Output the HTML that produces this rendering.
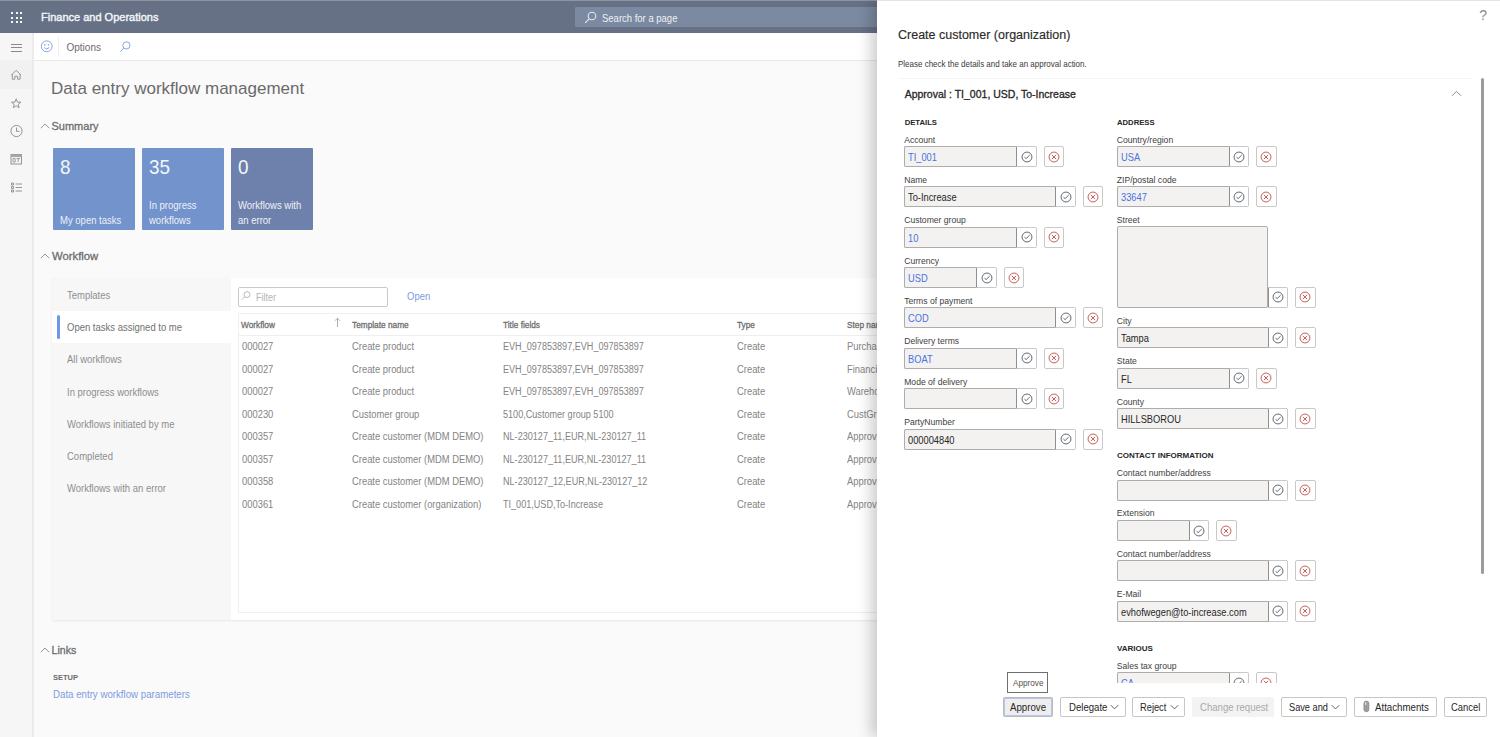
<!DOCTYPE html>
<html><head><meta charset="utf-8"><style>
html,body{margin:0;padding:0;width:1500px;height:737px;overflow:hidden;background:#fafafa;position:relative}
body{font-family:"Liberation Sans",sans-serif}
.t{position:absolute;line-height:1;white-space:nowrap}
</style></head><body>
<div style="position:absolute;left:0px;top:0px;width:1500px;height:33px;background:#667186"></div>
<div style="position:absolute;left:0px;top:0px;width:1500px;height:1px;background:#8e95a2"></div>
<div style="position:absolute;left:11.0px;top:12.0px;width:2px;height:2px;background:#f4f5f7"></div>
<div style="position:absolute;left:11.0px;top:16.6px;width:2px;height:2px;background:#f4f5f7"></div>
<div style="position:absolute;left:11.0px;top:21.2px;width:2px;height:2px;background:#f4f5f7"></div>
<div style="position:absolute;left:15.6px;top:12.0px;width:2px;height:2px;background:#f4f5f7"></div>
<div style="position:absolute;left:15.6px;top:16.6px;width:2px;height:2px;background:#f4f5f7"></div>
<div style="position:absolute;left:15.6px;top:21.2px;width:2px;height:2px;background:#f4f5f7"></div>
<div style="position:absolute;left:20.2px;top:12.0px;width:2px;height:2px;background:#f4f5f7"></div>
<div style="position:absolute;left:20.2px;top:16.6px;width:2px;height:2px;background:#f4f5f7"></div>
<div style="position:absolute;left:20.2px;top:21.2px;width:2px;height:2px;background:#f4f5f7"></div>
<div class="t" style="left:41px;top:12.00px;font-size:11.0px;color:#f4f5f7;-webkit-text-stroke:0.4px #f4f5f7">Finance and Operations</div>
<div style="position:absolute;left:575px;top:7px;width:330px;height:20px;background:#7b8aa1;border-radius:1px"></div>
<svg style="position:absolute;left:584px;top:11px" width="14" height="14" viewBox="0 0 14 14"><circle cx="8" cy="5" r="3.8" fill="none" stroke="#e8ebf0" stroke-width="1.1"/><line x1="5.3" y1="7.7" x2="1.2" y2="11.8" stroke="#e8ebf0" stroke-width="1.1"/></svg>
<div class="t" style="left:602px;top:13.00px;font-size:10.64px;color:#eef0f4;transform:scaleX(0.8929);transform-origin:0 0;">Search for a page</div>
<div style="position:absolute;left:0px;top:33px;width:33px;height:704px;background:#f6f6f6"></div>
<div style="position:absolute;left:32.4px;top:33px;width:1.6px;height:704px;background:#ebebeb"></div>
<div style="position:absolute;left:0px;top:60px;width:32.4px;height:29px;background:#f1f1f1"></div>
<div style="position:absolute;left:11px;top:43.5px;width:11px;height:1px;background:#8a8a8a"></div>
<div style="position:absolute;left:11px;top:47px;width:11px;height:1px;background:#8a8a8a"></div>
<div style="position:absolute;left:11px;top:50.5px;width:11px;height:1px;background:#8a8a8a"></div>
<svg style="position:absolute;left:0;top:60px" width="33" height="140" viewBox="0 0 33 140" fill="none" stroke="#8a8a8a" stroke-width="0.9">
<path d="M11.3 15.2 L16.2 10.3 L21.1 15.2 M12.3 14.2 V19.2 H14.8 V16.3 H17.6 V19.2 H20.1 V14.2"/>
<path d="M16.2 38.8 L17.4 42.1 L20.9 42.2 L18.2 44.4 L19.1 47.8 L16.2 45.8 L13.3 47.8 L14.2 44.4 L11.5 42.2 L15 42.1 Z"/>
<circle cx="16.5" cy="71" r="5.6"/><path d="M16.5 67.5 V71.3 H19.5"/>
<rect x="11" y="94.5" width="10.5" height="9.5" /><rect x="11" y="94.5" width="10.5" height="2.6" fill="#a8a8a8" stroke="none"/><path d="M13 98.6 H15.2 V102 H13 Z M16.5 98.6 H20 M18.2 98.6 V102" stroke-width="0.8"/>
<path d="M11.5 123 h2 v2 h-2 z M11.5 126.5 h2 v2 h-2 z M11.5 130 h2 v2 h-2 z M15.5 124 H22 M15.5 127.5 H22 M15.5 131 H22"/>
</svg>
<div style="position:absolute;left:34px;top:33px;width:1466px;height:27px;background:#ffffff"></div>
<div style="position:absolute;left:34px;top:60px;width:1466px;height:1px;background:#e9e9e9"></div>
<svg style="position:absolute;left:38px;top:38px" width="18" height="18" viewBox="0 0 18 18" fill="none" stroke="#7d9be0" stroke-width="0.9">
<circle cx="8.7" cy="8.3" r="5.4"/><path d="M6.2 9.6 Q8.7 12.2 11.2 9.6"/><circle cx="6.9" cy="6.9" r="0.35" fill="#7d9be0"/><circle cx="10.5" cy="6.9" r="0.35" fill="#7d9be0"/></svg>
<div style="position:absolute;left:58px;top:37px;width:1px;height:20px;background:#eeeeee"></div>
<div class="t" style="left:66.5px;top:43.00px;font-size:10.0px;color:#6b6b6b;">Options</div>
<svg style="position:absolute;left:118px;top:40px" width="14" height="14" viewBox="0 0 14 14"><circle cx="8.4" cy="5.4" r="3.6" fill="none" stroke="#7d9be0" stroke-width="0.9"/><line x1="5.8" y1="8" x2="2.4" y2="11.6" stroke="#7d9be0" stroke-width="0.9"/></svg>
<div style="position:absolute;left:34px;top:61px;width:1466px;height:676px;background:#fafafa"></div>
<div class="t" style="left:51px;top:80.00px;font-size:17.0px;color:#6a6a6a;">Data entry workflow management</div>
<svg style="position:absolute;left:40px;top:122.5px" width="10" height="6" viewBox="0 0 10 6"><path d="M0.8 5.2 L5 1 L9.2 5.2" fill="none" stroke="#8a8a8a" stroke-width="0.9"/></svg>
<div class="t" style="left:51.5px;top:121.00px;font-size:11.0px;color:#6d6d6d;-webkit-text-stroke:0.3px #6d6d6d;">Summary</div>
<div style="position:absolute;left:53px;top:148px;width:82px;height:82px;background:#7293cb;border-radius:1px"></div>
<div class="t" style="left:60px;top:156.00px;font-size:21.0px;color:#f4f6fa;transform:scaleX(0.9);transform-origin:0 0">8</div>
<div class="t" style="left:60px;top:216.00px;font-size:10.36px;color:#eef1f7;transform:scaleX(0.9174);transform-origin:0 0;">My open tasks</div>
<div style="position:absolute;left:142px;top:148px;width:82px;height:82px;background:#7293cb;border-radius:1px"></div>
<div class="t" style="left:149px;top:156.00px;font-size:21.0px;color:#f4f6fa;transform:scaleX(0.9);transform-origin:0 0">35</div>
<div class="t" style="left:149px;top:201.00px;font-size:10.36px;color:#eef1f7;transform:scaleX(0.9174);transform-origin:0 0;">In progress</div>
<div class="t" style="left:149px;top:216.00px;font-size:10.36px;color:#eef1f7;transform:scaleX(0.9174);transform-origin:0 0;">workflows</div>
<div style="position:absolute;left:231px;top:148px;width:82px;height:82px;background:#6e81ac;border-radius:1px"></div>
<div class="t" style="left:238px;top:156.00px;font-size:21.0px;color:#f4f6fa;transform:scaleX(0.9);transform-origin:0 0">0</div>
<div class="t" style="left:238px;top:201.00px;font-size:10.36px;color:#eef1f7;transform:scaleX(0.9174);transform-origin:0 0;">Workflows with</div>
<div class="t" style="left:238px;top:216.00px;font-size:10.36px;color:#eef1f7;transform:scaleX(0.9174);transform-origin:0 0;">an error</div>
<svg style="position:absolute;left:40px;top:252.5px" width="10" height="6" viewBox="0 0 10 6"><path d="M0.8 5.2 L5 1 L9.2 5.2" fill="none" stroke="#8a8a8a" stroke-width="0.9"/></svg>
<div class="t" style="left:52px;top:251.00px;font-size:11.3px;color:#6d6d6d;-webkit-text-stroke:0.3px #6d6d6d;">Workflow</div>
<div style="position:absolute;left:52px;top:278px;width:830px;height:342px;background:#ffffff;box-shadow:0 1px 2px rgba(0,0,0,0.08)"></div>
<div style="position:absolute;left:52px;top:278px;width:179px;height:342px;background:#f7f7f7"></div>
<div style="position:absolute;left:52px;top:311px;width:179px;height:32px;background:#ffffff"></div>
<div style="position:absolute;left:56.5px;top:314.5px;width:3px;height:24.5px;background:#6f97e6;border-radius:1.5px"></div>
<div class="t" style="left:67px;top:290.00px;font-size:11.21px;color:#8e8e8e;transform:scaleX(0.8475);transform-origin:0 0;">Templates</div>
<div class="t" style="left:67px;top:322.00px;font-size:11.21px;color:#717171;transform:scaleX(0.8475);transform-origin:0 0;">Open tasks assigned to me</div>
<div class="t" style="left:67px;top:354.00px;font-size:11.21px;color:#8e8e8e;transform:scaleX(0.8475);transform-origin:0 0;">All workflows</div>
<div class="t" style="left:67px;top:387.00px;font-size:11.21px;color:#8e8e8e;transform:scaleX(0.8475);transform-origin:0 0;">In progress workflows</div>
<div class="t" style="left:67px;top:419.00px;font-size:11.21px;color:#8e8e8e;transform:scaleX(0.8475);transform-origin:0 0;">Workflows initiated by me</div>
<div class="t" style="left:67px;top:451.00px;font-size:11.21px;color:#8e8e8e;transform:scaleX(0.8475);transform-origin:0 0;">Completed</div>
<div class="t" style="left:67px;top:483.00px;font-size:11.21px;color:#8e8e8e;transform:scaleX(0.8475);transform-origin:0 0;">Workflows with an error</div>
<div style="position:absolute;left:238px;top:286.5px;width:150px;height:20.5px;background:#fff;border:1px solid #c9c9c9;border-radius:2px;box-sizing:border-box"></div>
<svg style="position:absolute;left:240px;top:290px" width="12" height="12" viewBox="0 0 12 12"><circle cx="7" cy="4.6" r="3" fill="none" stroke="#a9a9a9" stroke-width="0.8"/><line x1="4.9" y1="6.7" x2="1.8" y2="9.8" stroke="#a9a9a9" stroke-width="0.8"/></svg>
<div class="t" style="left:256px;top:293.00px;font-size:10.08px;color:#b3b3b3;transform:scaleX(0.8929);transform-origin:0 0;">Filter</div>
<div class="t" style="left:406.5px;top:292.00px;font-size:10.26px;color:#7d9be0;transform:scaleX(0.9259);transform-origin:0 0;">Open</div>
<div style="position:absolute;left:238px;top:313px;width:660px;height:300px;background:#fff;border:1px solid #f0f0f0;box-sizing:border-box"></div>
<div style="position:absolute;left:238px;top:334.5px;width:660px;height:1px;background:#efefef"></div>
<div class="t" style="left:241.3px;top:320.00px;font-size:9.54px;color:#6d6d6d;-webkit-text-stroke:0.3px #6d6d6d;transform:scaleX(0.8696);transform-origin:0 0;">Workflow</div>
<div class="t" style="left:351.7px;top:320.00px;font-size:9.54px;color:#6d6d6d;-webkit-text-stroke:0.3px #6d6d6d;transform:scaleX(0.8696);transform-origin:0 0;">Template name</div>
<div class="t" style="left:503px;top:320.00px;font-size:9.54px;color:#6d6d6d;-webkit-text-stroke:0.3px #6d6d6d;transform:scaleX(0.8696);transform-origin:0 0;">Title fields</div>
<div class="t" style="left:737px;top:320.00px;font-size:9.54px;color:#6d6d6d;-webkit-text-stroke:0.3px #6d6d6d;transform:scaleX(0.8696);transform-origin:0 0;">Type</div>
<div class="t" style="left:847px;top:320.00px;font-size:9.54px;color:#6d6d6d;-webkit-text-stroke:0.3px #6d6d6d;transform:scaleX(0.8696);transform-origin:0 0;">Step name</div>
<svg style="position:absolute;left:334px;top:317px" width="7" height="11" viewBox="0 0 7 11"><path d="M3.5 10 V1.2 M1 3.7 L3.5 1.2 L6 3.7" fill="none" stroke="#9a9a9a" stroke-width="0.8"/></svg>
<div class="t" style="left:241.5px;top:341.00px;font-size:10.53px;color:#848484;transform:scaleX(0.8929);transform-origin:0 0;">000027</div>
<div class="t" style="left:351.7px;top:341.00px;font-size:10.53px;color:#848484;transform:scaleX(0.8929);transform-origin:0 0;">Create product</div>
<div class="t" style="left:503px;top:342.00px;font-size:10.19px;color:#848484;transform:scaleX(0.8929);transform-origin:0 0;">EVH_097853897,EVH_097853897</div>
<div class="t" style="left:737px;top:341.00px;font-size:10.53px;color:#848484;transform:scaleX(0.8929);transform-origin:0 0;">Create</div>
<div class="t" style="left:847px;top:341.00px;font-size:10.53px;color:#848484;transform:scaleX(0.8929);transform-origin:0 0;">Purchase</div>
<div class="t" style="left:241.5px;top:364.00px;font-size:10.53px;color:#848484;transform:scaleX(0.8929);transform-origin:0 0;">000027</div>
<div class="t" style="left:351.7px;top:364.00px;font-size:10.53px;color:#848484;transform:scaleX(0.8929);transform-origin:0 0;">Create product</div>
<div class="t" style="left:503px;top:365.00px;font-size:10.19px;color:#848484;transform:scaleX(0.8929);transform-origin:0 0;">EVH_097853897,EVH_097853897</div>
<div class="t" style="left:737px;top:364.00px;font-size:10.53px;color:#848484;transform:scaleX(0.8929);transform-origin:0 0;">Create</div>
<div class="t" style="left:847px;top:364.00px;font-size:10.53px;color:#848484;transform:scaleX(0.8929);transform-origin:0 0;">Financial</div>
<div class="t" style="left:241.5px;top:386.00px;font-size:10.53px;color:#848484;transform:scaleX(0.8929);transform-origin:0 0;">000027</div>
<div class="t" style="left:351.7px;top:386.00px;font-size:10.53px;color:#848484;transform:scaleX(0.8929);transform-origin:0 0;">Create product</div>
<div class="t" style="left:503px;top:387.00px;font-size:10.19px;color:#848484;transform:scaleX(0.8929);transform-origin:0 0;">EVH_097853897,EVH_097853897</div>
<div class="t" style="left:737px;top:386.00px;font-size:10.53px;color:#848484;transform:scaleX(0.8929);transform-origin:0 0;">Create</div>
<div class="t" style="left:847px;top:386.00px;font-size:10.53px;color:#848484;transform:scaleX(0.8929);transform-origin:0 0;">Warehouse</div>
<div class="t" style="left:241.5px;top:409.00px;font-size:10.53px;color:#848484;transform:scaleX(0.8929);transform-origin:0 0;">000230</div>
<div class="t" style="left:351.7px;top:409.00px;font-size:10.53px;color:#848484;transform:scaleX(0.8929);transform-origin:0 0;">Customer group</div>
<div class="t" style="left:503px;top:410.00px;font-size:10.19px;color:#848484;transform:scaleX(0.8929);transform-origin:0 0;">5100,Customer group 5100</div>
<div class="t" style="left:737px;top:409.00px;font-size:10.53px;color:#848484;transform:scaleX(0.8929);transform-origin:0 0;">Create</div>
<div class="t" style="left:847px;top:409.00px;font-size:10.53px;color:#848484;transform:scaleX(0.8929);transform-origin:0 0;">CustGroup</div>
<div class="t" style="left:241.5px;top:431.00px;font-size:10.53px;color:#848484;transform:scaleX(0.8929);transform-origin:0 0;">000357</div>
<div class="t" style="left:351.7px;top:431.00px;font-size:10.53px;color:#848484;transform:scaleX(0.8929);transform-origin:0 0;">Create customer (MDM DEMO)</div>
<div class="t" style="left:503px;top:432.00px;font-size:10.19px;color:#848484;transform:scaleX(0.8929);transform-origin:0 0;">NL-230127_11,EUR,NL-230127_11</div>
<div class="t" style="left:737px;top:431.00px;font-size:10.53px;color:#848484;transform:scaleX(0.8929);transform-origin:0 0;">Create</div>
<div class="t" style="left:847px;top:431.00px;font-size:10.53px;color:#848484;transform:scaleX(0.8929);transform-origin:0 0;">Approval</div>
<div class="t" style="left:241.5px;top:454.00px;font-size:10.53px;color:#848484;transform:scaleX(0.8929);transform-origin:0 0;">000357</div>
<div class="t" style="left:351.7px;top:454.00px;font-size:10.53px;color:#848484;transform:scaleX(0.8929);transform-origin:0 0;">Create customer (MDM DEMO)</div>
<div class="t" style="left:503px;top:455.00px;font-size:10.19px;color:#848484;transform:scaleX(0.8929);transform-origin:0 0;">NL-230127_11,EUR,NL-230127_11</div>
<div class="t" style="left:737px;top:454.00px;font-size:10.53px;color:#848484;transform:scaleX(0.8929);transform-origin:0 0;">Create</div>
<div class="t" style="left:847px;top:454.00px;font-size:10.53px;color:#848484;transform:scaleX(0.8929);transform-origin:0 0;">Approval</div>
<div class="t" style="left:241.5px;top:476.00px;font-size:10.53px;color:#848484;transform:scaleX(0.8929);transform-origin:0 0;">000358</div>
<div class="t" style="left:351.7px;top:476.00px;font-size:10.53px;color:#848484;transform:scaleX(0.8929);transform-origin:0 0;">Create customer (MDM DEMO)</div>
<div class="t" style="left:503px;top:477.00px;font-size:10.19px;color:#848484;transform:scaleX(0.8929);transform-origin:0 0;">NL-230127_12,EUR,NL-230127_12</div>
<div class="t" style="left:737px;top:476.00px;font-size:10.53px;color:#848484;transform:scaleX(0.8929);transform-origin:0 0;">Create</div>
<div class="t" style="left:847px;top:476.00px;font-size:10.53px;color:#848484;transform:scaleX(0.8929);transform-origin:0 0;">Approval</div>
<div class="t" style="left:241.5px;top:499.00px;font-size:10.53px;color:#848484;transform:scaleX(0.8929);transform-origin:0 0;">000361</div>
<div class="t" style="left:351.7px;top:499.00px;font-size:10.53px;color:#848484;transform:scaleX(0.8929);transform-origin:0 0;">Create customer (organization)</div>
<div class="t" style="left:503px;top:500.00px;font-size:10.19px;color:#848484;transform:scaleX(0.8929);transform-origin:0 0;">TI_001,USD,To-Increase</div>
<div class="t" style="left:737px;top:499.00px;font-size:10.53px;color:#848484;transform:scaleX(0.8929);transform-origin:0 0;">Create</div>
<div class="t" style="left:847px;top:499.00px;font-size:10.53px;color:#848484;transform:scaleX(0.8929);transform-origin:0 0;">Approval</div>
<svg style="position:absolute;left:40px;top:647px" width="10" height="6" viewBox="0 0 10 6"><path d="M0.8 5.2 L5 1 L9.2 5.2" fill="none" stroke="#8a8a8a" stroke-width="0.9"/></svg>
<div class="t" style="left:51.6px;top:645.00px;font-size:10.6px;color:#6d6d6d;-webkit-text-stroke:0.3px #6d6d6d;">Links</div>
<div class="t" style="left:53px;top:674.00px;font-size:7.5px;color:#6a6a6a;font-weight:700;">SETUP</div>
<div class="t" style="left:53.4px;top:689.00px;font-size:11.06px;color:#7d9be0;transform:scaleX(0.8772);transform-origin:0 0;">Data entry workflow parameters</div>
<div style="position:absolute;left:877px;top:0;width:623px;height:737px;background:#fff;box-shadow:-6px 0 14px rgba(0,0,0,0.2)"></div>
<div style="position:absolute;left:877px;top:0px;width:623px;height:1px;background:#e3e3e3"></div>
<div class="t" style="left:1479.2px;top:8.00px;font-size:14.0px;color:#8a8a8a;">?</div>
<div class="t" style="left:898px;top:29.00px;font-size:12.5px;color:#2b2b2b;-webkit-text-stroke:0.15px #2b2b2b">Create customer (organization)</div>
<div class="t" style="left:898px;top:60.00px;font-size:8.56px;color:#3a3a3a;transform:scaleX(0.9346);transform-origin:0 0;">Please check the details and take an approval action.</div>
<div style="position:absolute;left:899px;top:78px;width:574px;height:1px;background:#f4f4f4"></div>
<div class="t" style="left:904.7px;top:89.00px;font-size:10.5px;color:#262626;-webkit-text-stroke:0.3px #262626;">Approval : TI_001, USD, To-Increase</div>
<svg style="position:absolute;left:1451px;top:90px" width="11" height="7" viewBox="0 0 11 7"><path d="M1 5.8 L5.5 1.3 L10 5.8" fill="none" stroke="#6b7fa6" stroke-width="0.9"/></svg>
<div style="position:absolute;left:1480.5px;top:78px;width:3.5px;height:495.5px;background:#9b9b9b;border-radius:2px"></div>
<div class="t" style="left:904.7px;top:119.00px;font-size:7.7px;color:#262626;font-weight:700;">DETAILS</div>
<div class="t" style="left:1117px;top:119.00px;font-size:7.7px;color:#262626;font-weight:700;">ADDRESS</div>
<div class="t" style="left:904.2px;top:136.00px;font-size:8.6px;color:#3e3e3e;">Account</div>
<div style="position:absolute;left:904.2px;top:146.2px;width:112px;height:21px;background:#f3f2f1;border:1px solid #adadad;border-right:none;border-radius:2px 0 0 2px;box-sizing:border-box"></div>
<div class="t" style="left:908.2px;top:152.00px;font-size:10.6px;color:#4a73e0;transform:scaleX(0.8772);transform-origin:0 0;">TI_001</div>
<div style="position:absolute;left:1016.2px;top:146.2px;width:20.6px;height:21px;background:#fff;border:1px solid #c8c8c8;border-left:1px solid #8f8f8f;border-radius:0 2px 2px 0;box-sizing:border-box"></div>
<svg style="position:absolute;left:1019.5px;top:149.7px" width="14" height="14" viewBox="0 0 14 14"><circle cx="7" cy="7" r="4.95" fill="none" stroke="#46505a" stroke-width="0.85"/><path d="M4.5 7.2 L6.1 8.6 L9.7 5.1" fill="none" stroke="#46505a" stroke-width="0.85"/></svg>
<div style="position:absolute;left:1043.5px;top:146.2px;width:20.6px;height:21px;background:#fff;border:1px solid #c8c8c8;border-radius:2px;box-sizing:border-box"></div>
<svg style="position:absolute;left:1046.8px;top:149.7px" width="14" height="14" viewBox="0 0 14 14"><circle cx="7" cy="7" r="4.95" fill="none" stroke="#c0443f" stroke-width="0.85"/><path d="M4.9 4.9 L9.1 9.1 M9.1 4.9 L4.9 9.1" fill="none" stroke="#c0443f" stroke-width="0.85"/></svg>
<div class="t" style="left:904.2px;top:176.00px;font-size:8.6px;color:#3e3e3e;">Name</div>
<div style="position:absolute;left:904.2px;top:186.4px;width:151px;height:21px;background:#f3f2f1;border:1px solid #adadad;border-right:none;border-radius:2px 0 0 2px;box-sizing:border-box"></div>
<div class="t" style="left:908.2px;top:192.00px;font-size:10.6px;color:#262626;transform:scaleX(0.8772);transform-origin:0 0;">To-Increase</div>
<div style="position:absolute;left:1055.2px;top:186.4px;width:20.6px;height:21px;background:#fff;border:1px solid #c8c8c8;border-left:1px solid #8f8f8f;border-radius:0 2px 2px 0;box-sizing:border-box"></div>
<svg style="position:absolute;left:1058.5px;top:189.9px" width="14" height="14" viewBox="0 0 14 14"><circle cx="7" cy="7" r="4.95" fill="none" stroke="#46505a" stroke-width="0.85"/><path d="M4.5 7.2 L6.1 8.6 L9.7 5.1" fill="none" stroke="#46505a" stroke-width="0.85"/></svg>
<div style="position:absolute;left:1082.5px;top:186.4px;width:20.6px;height:21px;background:#fff;border:1px solid #c8c8c8;border-radius:2px;box-sizing:border-box"></div>
<svg style="position:absolute;left:1085.8px;top:189.9px" width="14" height="14" viewBox="0 0 14 14"><circle cx="7" cy="7" r="4.95" fill="none" stroke="#c0443f" stroke-width="0.85"/><path d="M4.9 4.9 L9.1 9.1 M9.1 4.9 L4.9 9.1" fill="none" stroke="#c0443f" stroke-width="0.85"/></svg>
<div class="t" style="left:904.2px;top:216.00px;font-size:8.6px;color:#3e3e3e;">Customer group</div>
<div style="position:absolute;left:904.2px;top:226.8px;width:112px;height:21px;background:#f3f2f1;border:1px solid #adadad;border-right:none;border-radius:2px 0 0 2px;box-sizing:border-box"></div>
<div class="t" style="left:908.2px;top:233.00px;font-size:10.6px;color:#4a73e0;transform:scaleX(0.8772);transform-origin:0 0;">10</div>
<div style="position:absolute;left:1016.2px;top:226.8px;width:20.6px;height:21px;background:#fff;border:1px solid #c8c8c8;border-left:1px solid #8f8f8f;border-radius:0 2px 2px 0;box-sizing:border-box"></div>
<svg style="position:absolute;left:1019.5px;top:230.3px" width="14" height="14" viewBox="0 0 14 14"><circle cx="7" cy="7" r="4.95" fill="none" stroke="#46505a" stroke-width="0.85"/><path d="M4.5 7.2 L6.1 8.6 L9.7 5.1" fill="none" stroke="#46505a" stroke-width="0.85"/></svg>
<div style="position:absolute;left:1043.5px;top:226.8px;width:20.6px;height:21px;background:#fff;border:1px solid #c8c8c8;border-radius:2px;box-sizing:border-box"></div>
<svg style="position:absolute;left:1046.8px;top:230.3px" width="14" height="14" viewBox="0 0 14 14"><circle cx="7" cy="7" r="4.95" fill="none" stroke="#c0443f" stroke-width="0.85"/><path d="M4.9 4.9 L9.1 9.1 M9.1 4.9 L4.9 9.1" fill="none" stroke="#c0443f" stroke-width="0.85"/></svg>
<div class="t" style="left:904.2px;top:257.00px;font-size:8.6px;color:#3e3e3e;">Currency</div>
<div style="position:absolute;left:904.2px;top:267.2px;width:72px;height:21px;background:#f3f2f1;border:1px solid #adadad;border-right:none;border-radius:2px 0 0 2px;box-sizing:border-box"></div>
<div class="t" style="left:908.2px;top:273.00px;font-size:10.6px;color:#4a73e0;transform:scaleX(0.8772);transform-origin:0 0;">USD</div>
<div style="position:absolute;left:976.2px;top:267.2px;width:20.6px;height:21px;background:#fff;border:1px solid #c8c8c8;border-left:1px solid #8f8f8f;border-radius:0 2px 2px 0;box-sizing:border-box"></div>
<svg style="position:absolute;left:979.5px;top:270.7px" width="14" height="14" viewBox="0 0 14 14"><circle cx="7" cy="7" r="4.95" fill="none" stroke="#46505a" stroke-width="0.85"/><path d="M4.5 7.2 L6.1 8.6 L9.7 5.1" fill="none" stroke="#46505a" stroke-width="0.85"/></svg>
<div style="position:absolute;left:1003.5px;top:267.2px;width:20.6px;height:21px;background:#fff;border:1px solid #c8c8c8;border-radius:2px;box-sizing:border-box"></div>
<svg style="position:absolute;left:1006.8px;top:270.7px" width="14" height="14" viewBox="0 0 14 14"><circle cx="7" cy="7" r="4.95" fill="none" stroke="#c0443f" stroke-width="0.85"/><path d="M4.9 4.9 L9.1 9.1 M9.1 4.9 L4.9 9.1" fill="none" stroke="#c0443f" stroke-width="0.85"/></svg>
<div class="t" style="left:904.2px;top:297.00px;font-size:8.6px;color:#3e3e3e;">Terms of payment</div>
<div style="position:absolute;left:904.2px;top:307.4px;width:151px;height:21px;background:#f3f2f1;border:1px solid #adadad;border-right:none;border-radius:2px 0 0 2px;box-sizing:border-box"></div>
<div class="t" style="left:908.2px;top:313.00px;font-size:10.6px;color:#4a73e0;transform:scaleX(0.8772);transform-origin:0 0;">COD</div>
<div style="position:absolute;left:1055.2px;top:307.4px;width:20.6px;height:21px;background:#fff;border:1px solid #c8c8c8;border-left:1px solid #8f8f8f;border-radius:0 2px 2px 0;box-sizing:border-box"></div>
<svg style="position:absolute;left:1058.5px;top:310.9px" width="14" height="14" viewBox="0 0 14 14"><circle cx="7" cy="7" r="4.95" fill="none" stroke="#46505a" stroke-width="0.85"/><path d="M4.5 7.2 L6.1 8.6 L9.7 5.1" fill="none" stroke="#46505a" stroke-width="0.85"/></svg>
<div style="position:absolute;left:1082.5px;top:307.4px;width:20.6px;height:21px;background:#fff;border:1px solid #c8c8c8;border-radius:2px;box-sizing:border-box"></div>
<svg style="position:absolute;left:1085.8px;top:310.9px" width="14" height="14" viewBox="0 0 14 14"><circle cx="7" cy="7" r="4.95" fill="none" stroke="#c0443f" stroke-width="0.85"/><path d="M4.9 4.9 L9.1 9.1 M9.1 4.9 L4.9 9.1" fill="none" stroke="#c0443f" stroke-width="0.85"/></svg>
<div class="t" style="left:904.2px;top:337.00px;font-size:8.6px;color:#3e3e3e;">Delivery terms</div>
<div style="position:absolute;left:904.2px;top:347.8px;width:112px;height:21px;background:#f3f2f1;border:1px solid #adadad;border-right:none;border-radius:2px 0 0 2px;box-sizing:border-box"></div>
<div class="t" style="left:908.2px;top:354.00px;font-size:10.6px;color:#4a73e0;transform:scaleX(0.8772);transform-origin:0 0;">BOAT</div>
<div style="position:absolute;left:1016.2px;top:347.8px;width:20.6px;height:21px;background:#fff;border:1px solid #c8c8c8;border-left:1px solid #8f8f8f;border-radius:0 2px 2px 0;box-sizing:border-box"></div>
<svg style="position:absolute;left:1019.5px;top:351.3px" width="14" height="14" viewBox="0 0 14 14"><circle cx="7" cy="7" r="4.95" fill="none" stroke="#46505a" stroke-width="0.85"/><path d="M4.5 7.2 L6.1 8.6 L9.7 5.1" fill="none" stroke="#46505a" stroke-width="0.85"/></svg>
<div style="position:absolute;left:1043.5px;top:347.8px;width:20.6px;height:21px;background:#fff;border:1px solid #c8c8c8;border-radius:2px;box-sizing:border-box"></div>
<svg style="position:absolute;left:1046.8px;top:351.3px" width="14" height="14" viewBox="0 0 14 14"><circle cx="7" cy="7" r="4.95" fill="none" stroke="#c0443f" stroke-width="0.85"/><path d="M4.9 4.9 L9.1 9.1 M9.1 4.9 L4.9 9.1" fill="none" stroke="#c0443f" stroke-width="0.85"/></svg>
<div class="t" style="left:904.2px;top:378.00px;font-size:8.6px;color:#3e3e3e;">Mode of delivery</div>
<div style="position:absolute;left:904.2px;top:388.4px;width:112px;height:21px;background:#f3f2f1;border:1px solid #adadad;border-right:none;border-radius:2px 0 0 2px;box-sizing:border-box"></div>
<div style="position:absolute;left:1016.2px;top:388.4px;width:20.6px;height:21px;background:#fff;border:1px solid #c8c8c8;border-left:1px solid #8f8f8f;border-radius:0 2px 2px 0;box-sizing:border-box"></div>
<svg style="position:absolute;left:1019.5px;top:391.9px" width="14" height="14" viewBox="0 0 14 14"><circle cx="7" cy="7" r="4.95" fill="none" stroke="#46505a" stroke-width="0.85"/><path d="M4.5 7.2 L6.1 8.6 L9.7 5.1" fill="none" stroke="#46505a" stroke-width="0.85"/></svg>
<div style="position:absolute;left:1043.5px;top:388.4px;width:20.6px;height:21px;background:#fff;border:1px solid #c8c8c8;border-radius:2px;box-sizing:border-box"></div>
<svg style="position:absolute;left:1046.8px;top:391.9px" width="14" height="14" viewBox="0 0 14 14"><circle cx="7" cy="7" r="4.95" fill="none" stroke="#c0443f" stroke-width="0.85"/><path d="M4.9 4.9 L9.1 9.1 M9.1 4.9 L4.9 9.1" fill="none" stroke="#c0443f" stroke-width="0.85"/></svg>
<div class="t" style="left:904.2px;top:418.00px;font-size:8.6px;color:#3e3e3e;">PartyNumber</div>
<div style="position:absolute;left:904.2px;top:428.8px;width:151px;height:21px;background:#f3f2f1;border:1px solid #adadad;border-right:none;border-radius:2px 0 0 2px;box-sizing:border-box"></div>
<div class="t" style="left:908.2px;top:435.00px;font-size:10.6px;color:#262626;transform:scaleX(0.8772);transform-origin:0 0;">000004840</div>
<div style="position:absolute;left:1055.2px;top:428.8px;width:20.6px;height:21px;background:#fff;border:1px solid #c8c8c8;border-left:1px solid #8f8f8f;border-radius:0 2px 2px 0;box-sizing:border-box"></div>
<svg style="position:absolute;left:1058.5px;top:432.3px" width="14" height="14" viewBox="0 0 14 14"><circle cx="7" cy="7" r="4.95" fill="none" stroke="#46505a" stroke-width="0.85"/><path d="M4.5 7.2 L6.1 8.6 L9.7 5.1" fill="none" stroke="#46505a" stroke-width="0.85"/></svg>
<div style="position:absolute;left:1082.5px;top:428.8px;width:20.6px;height:21px;background:#fff;border:1px solid #c8c8c8;border-radius:2px;box-sizing:border-box"></div>
<svg style="position:absolute;left:1085.8px;top:432.3px" width="14" height="14" viewBox="0 0 14 14"><circle cx="7" cy="7" r="4.95" fill="none" stroke="#c0443f" stroke-width="0.85"/><path d="M4.9 4.9 L9.1 9.1 M9.1 4.9 L4.9 9.1" fill="none" stroke="#c0443f" stroke-width="0.85"/></svg>
<div class="t" style="left:1116.8px;top:136.00px;font-size:8.6px;color:#3e3e3e;">Country/region</div>
<div style="position:absolute;left:1116.8px;top:146.2px;width:112px;height:21px;background:#f3f2f1;border:1px solid #adadad;border-right:none;border-radius:2px 0 0 2px;box-sizing:border-box"></div>
<div class="t" style="left:1120.8px;top:152.00px;font-size:10.6px;color:#4a73e0;transform:scaleX(0.8772);transform-origin:0 0;">USA</div>
<div style="position:absolute;left:1228.8px;top:146.2px;width:20.6px;height:21px;background:#fff;border:1px solid #c8c8c8;border-left:1px solid #8f8f8f;border-radius:0 2px 2px 0;box-sizing:border-box"></div>
<svg style="position:absolute;left:1232.1px;top:149.7px" width="14" height="14" viewBox="0 0 14 14"><circle cx="7" cy="7" r="4.95" fill="none" stroke="#46505a" stroke-width="0.85"/><path d="M4.5 7.2 L6.1 8.6 L9.7 5.1" fill="none" stroke="#46505a" stroke-width="0.85"/></svg>
<div style="position:absolute;left:1256.1px;top:146.2px;width:20.6px;height:21px;background:#fff;border:1px solid #c8c8c8;border-radius:2px;box-sizing:border-box"></div>
<svg style="position:absolute;left:1259.3999999999999px;top:149.7px" width="14" height="14" viewBox="0 0 14 14"><circle cx="7" cy="7" r="4.95" fill="none" stroke="#c0443f" stroke-width="0.85"/><path d="M4.9 4.9 L9.1 9.1 M9.1 4.9 L4.9 9.1" fill="none" stroke="#c0443f" stroke-width="0.85"/></svg>
<div class="t" style="left:1116.8px;top:176.00px;font-size:8.6px;color:#3e3e3e;">ZIP/postal code</div>
<div style="position:absolute;left:1116.8px;top:186.4px;width:112px;height:21px;background:#f3f2f1;border:1px solid #adadad;border-right:none;border-radius:2px 0 0 2px;box-sizing:border-box"></div>
<div class="t" style="left:1120.8px;top:192.00px;font-size:10.6px;color:#4a73e0;transform:scaleX(0.8772);transform-origin:0 0;">33647</div>
<div style="position:absolute;left:1228.8px;top:186.4px;width:20.6px;height:21px;background:#fff;border:1px solid #c8c8c8;border-left:1px solid #8f8f8f;border-radius:0 2px 2px 0;box-sizing:border-box"></div>
<svg style="position:absolute;left:1232.1px;top:189.9px" width="14" height="14" viewBox="0 0 14 14"><circle cx="7" cy="7" r="4.95" fill="none" stroke="#46505a" stroke-width="0.85"/><path d="M4.5 7.2 L6.1 8.6 L9.7 5.1" fill="none" stroke="#46505a" stroke-width="0.85"/></svg>
<div style="position:absolute;left:1256.1px;top:186.4px;width:20.6px;height:21px;background:#fff;border:1px solid #c8c8c8;border-radius:2px;box-sizing:border-box"></div>
<svg style="position:absolute;left:1259.3999999999999px;top:189.9px" width="14" height="14" viewBox="0 0 14 14"><circle cx="7" cy="7" r="4.95" fill="none" stroke="#c0443f" stroke-width="0.85"/><path d="M4.9 4.9 L9.1 9.1 M9.1 4.9 L4.9 9.1" fill="none" stroke="#c0443f" stroke-width="0.85"/></svg>
<div class="t" style="left:1116.8px;top:216.00px;font-size:8.6px;color:#3e3e3e;">Street</div>
<div style="position:absolute;left:1116.8px;top:226.4px;width:151px;height:81.2px;background:#f3f2f1;border:1px solid #adadad;border-radius:2px;box-sizing:border-box"></div>
<div style="position:absolute;left:1267.8px;top:286.6px;width:20.6px;height:21px;background:#fff;border:1px solid #c8c8c8;border-left:1px solid #8f8f8f;border-radius:0 2px 2px 0;box-sizing:border-box"></div>
<svg style="position:absolute;left:1271.1px;top:290.1px" width="14" height="14" viewBox="0 0 14 14"><circle cx="7" cy="7" r="4.95" fill="none" stroke="#46505a" stroke-width="0.85"/><path d="M4.5 7.2 L6.1 8.6 L9.7 5.1" fill="none" stroke="#46505a" stroke-width="0.85"/></svg>
<div style="position:absolute;left:1295.1px;top:286.6px;width:20.6px;height:21px;background:#fff;border:1px solid #c8c8c8;border-radius:2px;box-sizing:border-box"></div>
<svg style="position:absolute;left:1298.3999999999999px;top:290.1px" width="14" height="14" viewBox="0 0 14 14"><circle cx="7" cy="7" r="4.95" fill="none" stroke="#c0443f" stroke-width="0.85"/><path d="M4.9 4.9 L9.1 9.1 M9.1 4.9 L4.9 9.1" fill="none" stroke="#c0443f" stroke-width="0.85"/></svg>
<div class="t" style="left:1116.8px;top:317.00px;font-size:8.6px;color:#3e3e3e;">City</div>
<div style="position:absolute;left:1116.8px;top:327.4px;width:151px;height:21px;background:#f3f2f1;border:1px solid #adadad;border-right:none;border-radius:2px 0 0 2px;box-sizing:border-box"></div>
<div class="t" style="left:1120.8px;top:333.00px;font-size:10.6px;color:#262626;transform:scaleX(0.8772);transform-origin:0 0;">Tampa</div>
<div style="position:absolute;left:1267.8px;top:327.4px;width:20.6px;height:21px;background:#fff;border:1px solid #c8c8c8;border-left:1px solid #8f8f8f;border-radius:0 2px 2px 0;box-sizing:border-box"></div>
<svg style="position:absolute;left:1271.1px;top:330.9px" width="14" height="14" viewBox="0 0 14 14"><circle cx="7" cy="7" r="4.95" fill="none" stroke="#46505a" stroke-width="0.85"/><path d="M4.5 7.2 L6.1 8.6 L9.7 5.1" fill="none" stroke="#46505a" stroke-width="0.85"/></svg>
<div style="position:absolute;left:1295.1px;top:327.4px;width:20.6px;height:21px;background:#fff;border:1px solid #c8c8c8;border-radius:2px;box-sizing:border-box"></div>
<svg style="position:absolute;left:1298.3999999999999px;top:330.9px" width="14" height="14" viewBox="0 0 14 14"><circle cx="7" cy="7" r="4.95" fill="none" stroke="#c0443f" stroke-width="0.85"/><path d="M4.9 4.9 L9.1 9.1 M9.1 4.9 L4.9 9.1" fill="none" stroke="#c0443f" stroke-width="0.85"/></svg>
<div class="t" style="left:1116.8px;top:357.00px;font-size:8.6px;color:#3e3e3e;">State</div>
<div style="position:absolute;left:1116.8px;top:367.8px;width:112px;height:21px;background:#f3f2f1;border:1px solid #adadad;border-right:none;border-radius:2px 0 0 2px;box-sizing:border-box"></div>
<div class="t" style="left:1120.8px;top:374.00px;font-size:10.6px;color:#262626;transform:scaleX(0.8772);transform-origin:0 0;">FL</div>
<div style="position:absolute;left:1228.8px;top:367.8px;width:20.6px;height:21px;background:#fff;border:1px solid #c8c8c8;border-left:1px solid #8f8f8f;border-radius:0 2px 2px 0;box-sizing:border-box"></div>
<svg style="position:absolute;left:1232.1px;top:371.3px" width="14" height="14" viewBox="0 0 14 14"><circle cx="7" cy="7" r="4.95" fill="none" stroke="#46505a" stroke-width="0.85"/><path d="M4.5 7.2 L6.1 8.6 L9.7 5.1" fill="none" stroke="#46505a" stroke-width="0.85"/></svg>
<div style="position:absolute;left:1256.1px;top:367.8px;width:20.6px;height:21px;background:#fff;border:1px solid #c8c8c8;border-radius:2px;box-sizing:border-box"></div>
<svg style="position:absolute;left:1259.3999999999999px;top:371.3px" width="14" height="14" viewBox="0 0 14 14"><circle cx="7" cy="7" r="4.95" fill="none" stroke="#c0443f" stroke-width="0.85"/><path d="M4.9 4.9 L9.1 9.1 M9.1 4.9 L4.9 9.1" fill="none" stroke="#c0443f" stroke-width="0.85"/></svg>
<div class="t" style="left:1116.8px;top:398.00px;font-size:8.6px;color:#3e3e3e;">County</div>
<div style="position:absolute;left:1116.8px;top:408.2px;width:151px;height:21px;background:#f3f2f1;border:1px solid #adadad;border-right:none;border-radius:2px 0 0 2px;box-sizing:border-box"></div>
<div class="t" style="left:1120.8px;top:414.00px;font-size:10.6px;color:#262626;transform:scaleX(0.8772);transform-origin:0 0;">HILLSBOROU</div>
<div style="position:absolute;left:1267.8px;top:408.2px;width:20.6px;height:21px;background:#fff;border:1px solid #c8c8c8;border-left:1px solid #8f8f8f;border-radius:0 2px 2px 0;box-sizing:border-box"></div>
<svg style="position:absolute;left:1271.1px;top:411.7px" width="14" height="14" viewBox="0 0 14 14"><circle cx="7" cy="7" r="4.95" fill="none" stroke="#46505a" stroke-width="0.85"/><path d="M4.5 7.2 L6.1 8.6 L9.7 5.1" fill="none" stroke="#46505a" stroke-width="0.85"/></svg>
<div style="position:absolute;left:1295.1px;top:408.2px;width:20.6px;height:21px;background:#fff;border:1px solid #c8c8c8;border-radius:2px;box-sizing:border-box"></div>
<svg style="position:absolute;left:1298.3999999999999px;top:411.7px" width="14" height="14" viewBox="0 0 14 14"><circle cx="7" cy="7" r="4.95" fill="none" stroke="#c0443f" stroke-width="0.85"/><path d="M4.9 4.9 L9.1 9.1 M9.1 4.9 L4.9 9.1" fill="none" stroke="#c0443f" stroke-width="0.85"/></svg>
<div class="t" style="left:1117px;top:452.00px;font-size:8.0px;color:#262626;font-weight:700;">CONTACT INFORMATION</div>
<div class="t" style="left:1116.8px;top:469.00px;font-size:8.6px;color:#3e3e3e;">Contact number/address</div>
<div style="position:absolute;left:1116.8px;top:479.6px;width:151px;height:21px;background:#f3f2f1;border:1px solid #adadad;border-right:none;border-radius:2px 0 0 2px;box-sizing:border-box"></div>
<div style="position:absolute;left:1267.8px;top:479.6px;width:20.6px;height:21px;background:#fff;border:1px solid #c8c8c8;border-left:1px solid #8f8f8f;border-radius:0 2px 2px 0;box-sizing:border-box"></div>
<svg style="position:absolute;left:1271.1px;top:483.1px" width="14" height="14" viewBox="0 0 14 14"><circle cx="7" cy="7" r="4.95" fill="none" stroke="#46505a" stroke-width="0.85"/><path d="M4.5 7.2 L6.1 8.6 L9.7 5.1" fill="none" stroke="#46505a" stroke-width="0.85"/></svg>
<div style="position:absolute;left:1295.1px;top:479.6px;width:20.6px;height:21px;background:#fff;border:1px solid #c8c8c8;border-radius:2px;box-sizing:border-box"></div>
<svg style="position:absolute;left:1298.3999999999999px;top:483.1px" width="14" height="14" viewBox="0 0 14 14"><circle cx="7" cy="7" r="4.95" fill="none" stroke="#c0443f" stroke-width="0.85"/><path d="M4.9 4.9 L9.1 9.1 M9.1 4.9 L4.9 9.1" fill="none" stroke="#c0443f" stroke-width="0.85"/></svg>
<div class="t" style="left:1116.8px;top:509.00px;font-size:8.6px;color:#3e3e3e;">Extension</div>
<div style="position:absolute;left:1116.8px;top:520px;width:72px;height:21px;background:#f3f2f1;border:1px solid #adadad;border-right:none;border-radius:2px 0 0 2px;box-sizing:border-box"></div>
<div style="position:absolute;left:1188.8px;top:520px;width:20.6px;height:21px;background:#fff;border:1px solid #c8c8c8;border-left:1px solid #8f8f8f;border-radius:0 2px 2px 0;box-sizing:border-box"></div>
<svg style="position:absolute;left:1192.1px;top:523.5px" width="14" height="14" viewBox="0 0 14 14"><circle cx="7" cy="7" r="4.95" fill="none" stroke="#46505a" stroke-width="0.85"/><path d="M4.5 7.2 L6.1 8.6 L9.7 5.1" fill="none" stroke="#46505a" stroke-width="0.85"/></svg>
<div style="position:absolute;left:1216.1px;top:520px;width:20.6px;height:21px;background:#fff;border:1px solid #c8c8c8;border-radius:2px;box-sizing:border-box"></div>
<svg style="position:absolute;left:1219.3999999999999px;top:523.5px" width="14" height="14" viewBox="0 0 14 14"><circle cx="7" cy="7" r="4.95" fill="none" stroke="#c0443f" stroke-width="0.85"/><path d="M4.9 4.9 L9.1 9.1 M9.1 4.9 L4.9 9.1" fill="none" stroke="#c0443f" stroke-width="0.85"/></svg>
<div class="t" style="left:1116.8px;top:550.00px;font-size:8.6px;color:#3e3e3e;">Contact number/address</div>
<div style="position:absolute;left:1116.8px;top:560.4px;width:151px;height:21px;background:#f3f2f1;border:1px solid #adadad;border-right:none;border-radius:2px 0 0 2px;box-sizing:border-box"></div>
<div style="position:absolute;left:1267.8px;top:560.4px;width:20.6px;height:21px;background:#fff;border:1px solid #c8c8c8;border-left:1px solid #8f8f8f;border-radius:0 2px 2px 0;box-sizing:border-box"></div>
<svg style="position:absolute;left:1271.1px;top:563.9px" width="14" height="14" viewBox="0 0 14 14"><circle cx="7" cy="7" r="4.95" fill="none" stroke="#46505a" stroke-width="0.85"/><path d="M4.5 7.2 L6.1 8.6 L9.7 5.1" fill="none" stroke="#46505a" stroke-width="0.85"/></svg>
<div style="position:absolute;left:1295.1px;top:560.4px;width:20.6px;height:21px;background:#fff;border:1px solid #c8c8c8;border-radius:2px;box-sizing:border-box"></div>
<svg style="position:absolute;left:1298.3999999999999px;top:563.9px" width="14" height="14" viewBox="0 0 14 14"><circle cx="7" cy="7" r="4.95" fill="none" stroke="#c0443f" stroke-width="0.85"/><path d="M4.9 4.9 L9.1 9.1 M9.1 4.9 L4.9 9.1" fill="none" stroke="#c0443f" stroke-width="0.85"/></svg>
<div class="t" style="left:1116.8px;top:590.00px;font-size:8.6px;color:#3e3e3e;">E-Mail</div>
<div style="position:absolute;left:1116.8px;top:600.8px;width:151px;height:21px;background:#f3f2f1;border:1px solid #adadad;border-right:none;border-radius:2px 0 0 2px;box-sizing:border-box"></div>
<div class="t" style="left:1120.8px;top:607.00px;font-size:10.6px;color:#262626;transform:scaleX(0.8772);transform-origin:0 0;">evhofwegen@to-increase.com</div>
<div style="position:absolute;left:1267.8px;top:600.8px;width:20.6px;height:21px;background:#fff;border:1px solid #c8c8c8;border-left:1px solid #8f8f8f;border-radius:0 2px 2px 0;box-sizing:border-box"></div>
<svg style="position:absolute;left:1271.1px;top:604.3px" width="14" height="14" viewBox="0 0 14 14"><circle cx="7" cy="7" r="4.95" fill="none" stroke="#46505a" stroke-width="0.85"/><path d="M4.5 7.2 L6.1 8.6 L9.7 5.1" fill="none" stroke="#46505a" stroke-width="0.85"/></svg>
<div style="position:absolute;left:1295.1px;top:600.8px;width:20.6px;height:21px;background:#fff;border:1px solid #c8c8c8;border-radius:2px;box-sizing:border-box"></div>
<svg style="position:absolute;left:1298.3999999999999px;top:604.3px" width="14" height="14" viewBox="0 0 14 14"><circle cx="7" cy="7" r="4.95" fill="none" stroke="#c0443f" stroke-width="0.85"/><path d="M4.9 4.9 L9.1 9.1 M9.1 4.9 L4.9 9.1" fill="none" stroke="#c0443f" stroke-width="0.85"/></svg>
<div class="t" style="left:1117px;top:645.00px;font-size:8.0px;color:#262626;font-weight:700;">VARIOUS</div>
<div style="position:absolute;left:877px;top:0;width:623px;height:683px;overflow:hidden">
<div style="position:absolute;left:-877px;top:0;width:1500px;height:737px">
<div class="t" style="left:1116.8px;top:662.00px;font-size:8.6px;color:#3e3e3e;">Sales tax group</div>
<div style="position:absolute;left:1116.8px;top:672.4px;width:112px;height:21px;background:#f3f2f1;border:1px solid #adadad;border-right:none;border-radius:2px 0 0 2px;box-sizing:border-box"></div>
<div class="t" style="left:1120.8px;top:678.00px;font-size:10.6px;color:#4a73e0;transform:scaleX(0.8772);transform-origin:0 0;">CA</div>
<div style="position:absolute;left:1228.8px;top:672.4px;width:20.6px;height:21px;background:#fff;border:1px solid #c8c8c8;border-left:1px solid #8f8f8f;border-radius:0 2px 2px 0;box-sizing:border-box"></div>
<svg style="position:absolute;left:1232.1px;top:675.9px" width="14" height="14" viewBox="0 0 14 14"><circle cx="7" cy="7" r="4.95" fill="none" stroke="#46505a" stroke-width="0.85"/><path d="M4.5 7.2 L6.1 8.6 L9.7 5.1" fill="none" stroke="#46505a" stroke-width="0.85"/></svg>
<div style="position:absolute;left:1256.1px;top:672.4px;width:20.6px;height:21px;background:#fff;border:1px solid #c8c8c8;border-radius:2px;box-sizing:border-box"></div>
<svg style="position:absolute;left:1259.3999999999999px;top:675.9px" width="14" height="14" viewBox="0 0 14 14"><circle cx="7" cy="7" r="4.95" fill="none" stroke="#c0443f" stroke-width="0.85"/><path d="M4.9 4.9 L9.1 9.1 M9.1 4.9 L4.9 9.1" fill="none" stroke="#c0443f" stroke-width="0.85"/></svg>
</div></div>
<div style="position:absolute;left:1002.7px;top:696.5px;width:50.6px;height:20.3px;background:#efeeed;border:1px solid #b9b9b9;box-shadow:inset 0 0 0 1px #b5c9f0;border-radius:2px;box-sizing:border-box"></div>
<div class="t" style="left:1009.6px;top:702.00px;font-size:11.06px;color:#262626;transform:scaleX(0.8772);transform-origin:0 0;">Approve</div>
<div style="position:absolute;left:1060.3px;top:696.5px;width:65.3px;height:20.3px;background:#fff;border:1px solid #c6c6c6;border-radius:2px;box-sizing:border-box"></div>
<div class="t" style="left:1068.5px;top:702.00px;font-size:10.94px;color:#262626;transform:scaleX(0.8772);transform-origin:0 0;">Delegate</div>
<div style="position:absolute;left:1132.4px;top:696.5px;width:52.9px;height:20.3px;background:#fff;border:1px solid #c6c6c6;border-radius:2px;box-sizing:border-box"></div>
<div class="t" style="left:1140px;top:702.00px;font-size:10.6px;color:#262626;transform:scaleX(0.8772);transform-origin:0 0;">Reject</div>
<div style="position:absolute;left:1191.8px;top:696.5px;width:82px;height:20.3px;background:#f3f3f3;border:1px solid #f3f3f3;border-radius:2px;box-sizing:border-box"></div>
<div class="t" style="left:1199.5px;top:702.00px;font-size:10.94px;color:#a9a9a9;transform:scaleX(0.8772);transform-origin:0 0;">Change request</div>
<div style="position:absolute;left:1281.3px;top:696.5px;width:65.4px;height:20.3px;background:#fff;border:1px solid #c6c6c6;border-radius:2px;box-sizing:border-box"></div>
<div class="t" style="left:1289px;top:703.00px;font-size:10.49px;color:#262626;transform:scaleX(0.8772);transform-origin:0 0;">Save and</div>
<div style="position:absolute;left:1353.8px;top:696.5px;width:83.2px;height:20.3px;background:#fff;border:1px solid #c6c6c6;border-radius:2px;box-sizing:border-box"></div>
<div class="t" style="left:1375px;top:702.00px;font-size:11.06px;color:#262626;transform:scaleX(0.8772);transform-origin:0 0;">Attachments</div>
<div style="position:absolute;left:1443.7px;top:696.5px;width:43px;height:20.3px;background:#fff;border:1px solid #c6c6c6;border-radius:2px;box-sizing:border-box"></div>
<div class="t" style="left:1451.3px;top:702.00px;font-size:10.72px;color:#262626;transform:scaleX(0.8772);transform-origin:0 0;">Cancel</div>
<svg style="position:absolute;left:1110.0px;top:704px" width="9" height="6" viewBox="0 0 9 6"><path d="M0.8 1.2 L4.5 4.9 L8.2 1.2" fill="none" stroke="#444" stroke-width="0.85"/></svg>
<svg style="position:absolute;left:1169.8px;top:704px" width="9" height="6" viewBox="0 0 9 6"><path d="M0.8 1.2 L4.5 4.9 L8.2 1.2" fill="none" stroke="#444" stroke-width="0.85"/></svg>
<svg style="position:absolute;left:1331.1px;top:704px" width="9" height="6" viewBox="0 0 9 6"><path d="M0.8 1.2 L4.5 4.9 L8.2 1.2" fill="none" stroke="#444" stroke-width="0.85"/></svg>
<svg style="position:absolute;left:1362px;top:700px" width="9" height="13" viewBox="0 0 9 13"><rect x="1.9" y="1.1" width="5" height="10.6" rx="2.5" fill="#a3a3a3" stroke="#808080" stroke-width="0.7"/><path d="M3.7 2.6 V4.8" stroke="#fff" stroke-width="0.9"/><path d="M4.4 5 V10" stroke="#8a8a8a" stroke-width="0.6"/></svg>
<div style="position:absolute;left:1007.3px;top:671.8px;width:40.7px;height:20.8px;background:#fff;border:1px solid #6e6e6e;box-sizing:border-box"></div>
<div class="t" style="left:1012.5px;top:679.00px;font-size:9.02px;color:#555;transform:scaleX(0.9091);transform-origin:0 0;">Approve</div>
</body></html>
